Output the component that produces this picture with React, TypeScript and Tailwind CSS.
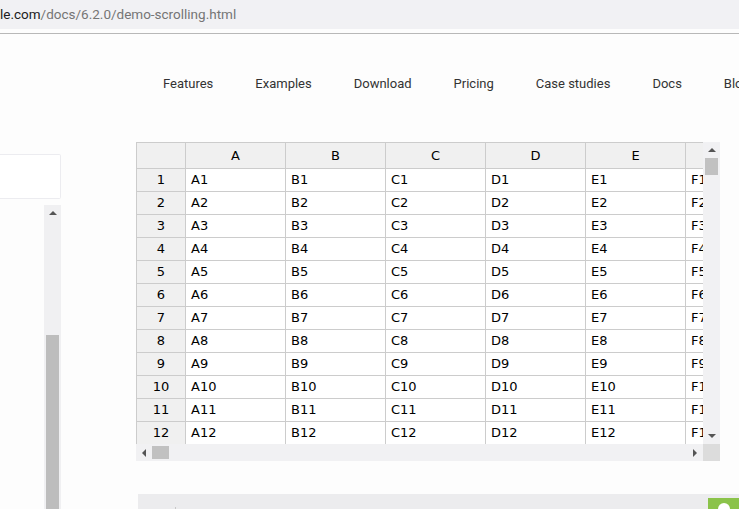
const cols = ["A", "B", "C", "D", "E", "F"];
const rows = Array.from({ length: 12 }, (_, i) => i + 1);
const nav = ["Features", "Examples", "Download", "Pricing", "Case studies", "Docs", "Blog"];

function Arrow({ dir }: { dir: "up" | "down" | "left" | "right" }) {
  const pts = {
    up: "0,4 4,0 8,4",
    down: "0,0 8,0 4,4",
    left: "4,0 4,8 0,4",
    right: "0,0 4,4 0,8",
  }[dir];
  const horiz = dir === "left" || dir === "right";
  return (
    <svg width={horiz ? 4 : 8} height={horiz ? 8 : 4} viewBox={horiz ? "0 0 4 8" : "0 0 8 4"}>
      <polygon points={pts} fill="#555" />
    </svg>
  );
}

function Grid() {
  return (
    <div className="w-[567px] h-[302px] overflow-hidden border-l border-t border-[#cccccc] font-['DejaVu_Sans',Verdana,sans-serif] text-[13px] text-black">
      <div className="flex h-[26px]">
        <div className="shrink-0 w-[49px] border-r border-b border-[#cccccc] bg-[#f0f0f0]"></div>
        {cols.map((c) => (
          <div key={c} className="shrink-0 w-[100px] border-r border-b border-[#cccccc] bg-[#f0f0f0] flex items-center justify-center">
            {c}
          </div>
        ))}
      </div>
      {rows.map((r) => (
        <div key={r} className="flex h-[23px]">
          <div className="shrink-0 w-[49px] border-r border-b border-[#cccccc] bg-[#f0f0f0] flex items-center justify-center">
            {r}
          </div>
          {cols.map((c) => (
            <div key={c} className="shrink-0 w-[100px] border-r border-b border-[#cccccc] bg-white flex items-center pl-[5px]">
              {c}
              {r}
            </div>
          ))}
        </div>
      ))}
    </div>
  );
}

export default function App() {
  return (
    <div className="w-[739px] h-[509px] overflow-hidden bg-[#fdfdfd] font-['Roboto',sans-serif]">
      <div className="h-[29px] bg-[#f1f1f4] flex items-center text-[13.5px] whitespace-nowrap">
        <span className="text-[#202020]">le.com</span>
        <span className="text-[#757575]">/docs/6.2.0/demo-scrolling.html</span>
      </div>
      <div className="h-[4px]"></div>
      <div className="h-px bg-[#b8b8b8]"></div>

      <nav className="h-[96px] flex items-center pl-[163px] gap-[42px] text-[13px] text-[#333333] whitespace-nowrap pt-[3px]">
        {nav.map((n) => (
          <a key={n} href="#">
            {n}
          </a>
        ))}
      </nav>

      <div className="flex">
        <div className="shrink-0 w-[61px] pt-[24px] flex flex-col">
          <div className="h-[45px] border border-l-0 border-[#ececf0] bg-white rounded-r-[2px]"></div>
          <div className="mt-[6px] ml-[44px] w-[17px] h-[320px] bg-[#f0f0f2] flex flex-col items-center">
            <div className="h-[16px] flex items-center justify-center">
              <Arrow dir="up" />
            </div>
            <div className="mt-[114px] w-[13px] flex-1 bg-[#bdbdbd]"></div>
          </div>
        </div>

        <div className="ml-[75px] pt-[12px] flex flex-col flex-1">
          <div className="flex">
            <Grid />
            <div className="w-[17px] h-[302px] bg-[#f1f1f3] flex flex-col items-center">
              <div className="h-[16px] flex items-center justify-center">
                <Arrow dir="up" />
              </div>
              <div className="w-[13px] h-[17px] bg-[#c1c1c1]"></div>
              <div className="flex-1"></div>
              <div className="h-[16px] flex items-center justify-center">
                <Arrow dir="down" />
              </div>
            </div>
          </div>
          <div className="flex">
            <div className="w-[567px] h-[17px] bg-[#f1f1f3] flex items-center">
              <div className="w-[16px] flex justify-center">
                <Arrow dir="left" />
              </div>
              <div className="w-[17px] h-[13px] bg-[#c1c1c1]"></div>
              <div className="flex-1"></div>
              <div className="w-[16px] flex justify-center">
                <Arrow dir="right" />
              </div>
            </div>
            <div className="w-[17px] h-[17px] bg-[#dcdcdc]"></div>
          </div>

          <div className="mt-[33px] ml-[2px] h-[40px] bg-[#ececee] flex justify-end pt-[4px]">
            <div className="ml-[37px] mt-[9px] w-px h-[4px] bg-[#c8c8c8]"></div>
            <div className="flex-1"></div>
            <div className="w-[31px] h-[30px] bg-[#8bc34a] flex justify-center pt-[5px]">
              <div className="w-[12px] h-[6px] rounded-t-full bg-white"></div>
            </div>
          </div>
        </div>
      </div>
    </div>
  );
}
